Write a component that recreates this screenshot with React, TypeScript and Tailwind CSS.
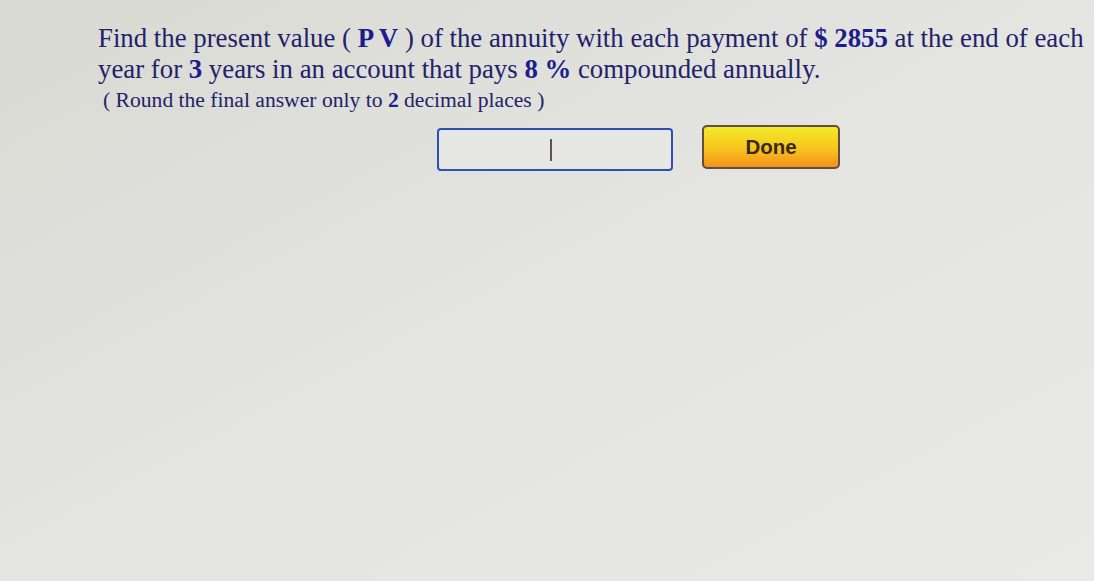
import React from "react";

export default function App() {
  return (
    <div className="w-[1094px] h-[581px] overflow-hidden bg-gradient-to-br from-[#d9d9d4] via-[#e4e4e0] to-[#e9e9e6]">
      <div className="pl-[98px] pt-[23px] font-['Liberation_Serif',serif] text-[#22226a]">
        <div className="text-[26.8px] leading-[31px] whitespace-nowrap">
          <div>
            Find the present value ( <b className="text-[#1c1c8c]">P V</b> ) of the annuity with each payment of{" "}
            <b className="text-[#1c1c8c]">$ 2855</b> at the end of each
          </div>
          <div>
            year for <b className="text-[#1c1c8c]">3</b> years in an account that pays{" "}
            <b className="text-[#1c1c8c]">8 %</b> compounded annually.
          </div>
        </div>
        <div className="pl-[5px] pt-[3px] text-[21.6px] leading-[24px] whitespace-nowrap">
          ( Round the final answer only to <b className="text-[#1c1c8c]">2</b> decimal places )
        </div>
      </div>
      <div className="flex items-start pl-[437px] pt-[13px] gap-[29px]">
        <div className="mt-[3px] w-[236px] h-[43px] rounded-[4px] border-[2.5px] border-[#2d4fb8] bg-[#e7e7e3] flex items-center justify-center">
          <div className="mr-[8px] w-[2px] h-[22px] bg-[#5a5650]" />
        </div>
        <button className="w-[138px] h-[44px] rounded-[5px] border-[2px] border-[#5e5040] bg-gradient-to-b from-[#f3ea2a] via-[#f6c81e] to-[#f4901c] font-['Liberation_Sans',sans-serif] font-bold text-[20.5px] text-[#3a2810] flex items-center justify-center">
          Done
        </button>
      </div>
    </div>
  );
}
